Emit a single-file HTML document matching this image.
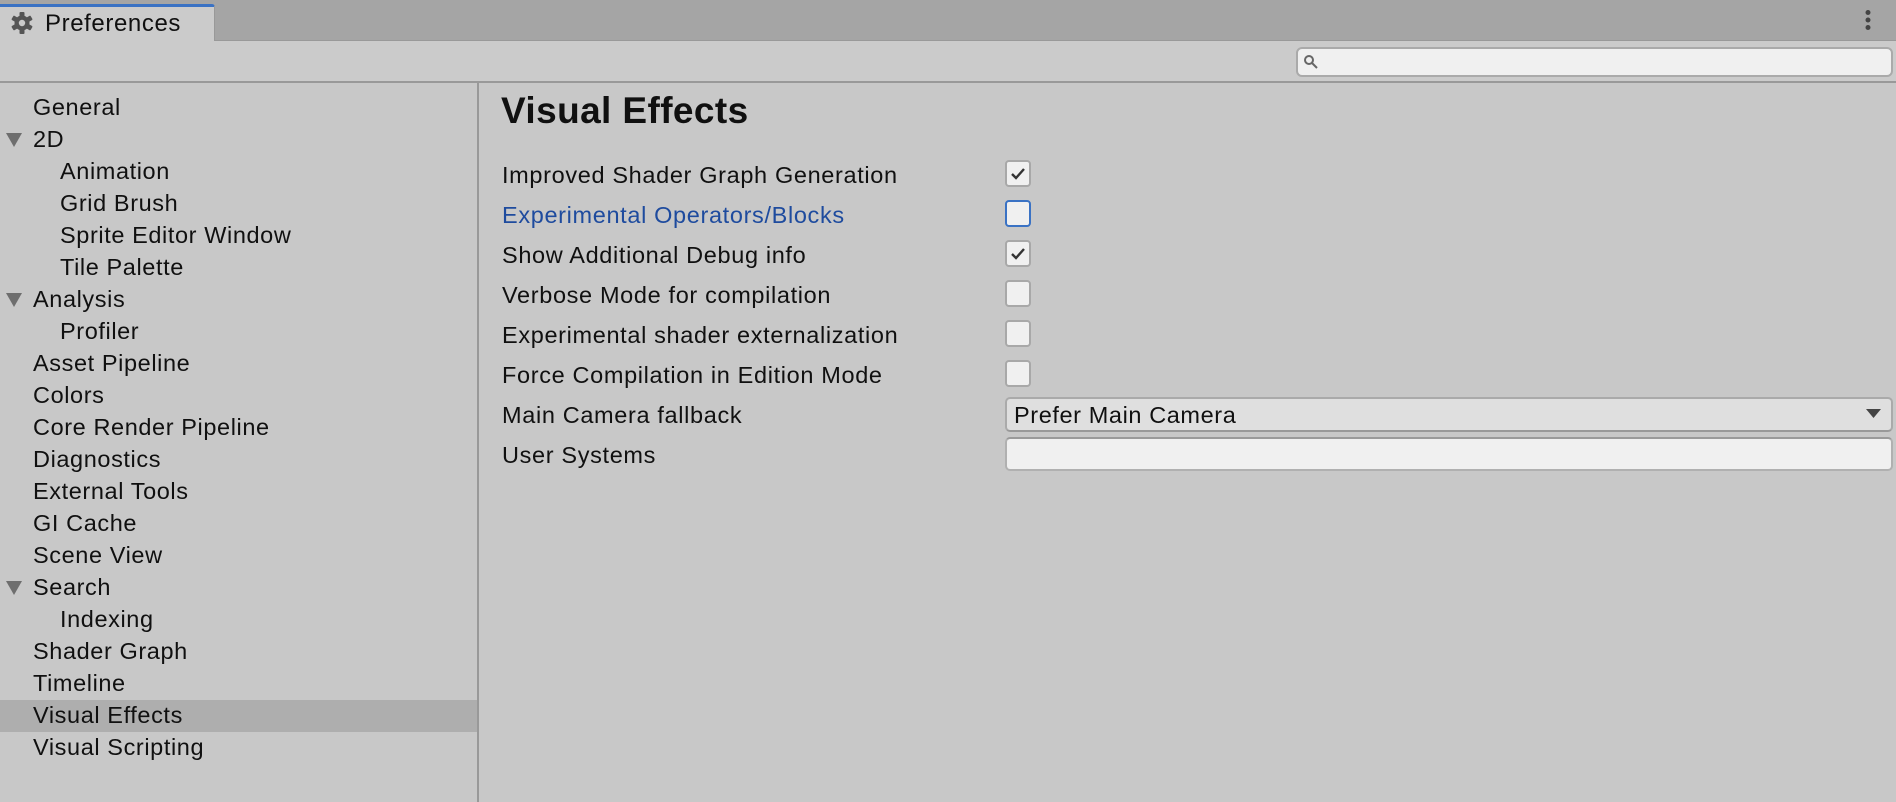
<!DOCTYPE html>
<html><head><meta charset="utf-8"><style>
*{margin:0;padding:0;box-sizing:border-box}
body{width:1896px;height:802px;background:#c8c8c8;font-family:"Liberation Sans",sans-serif;color:#101010;position:relative;overflow:hidden}
.a{position:absolute}
.tabbar{left:0;top:0;width:1896px;height:41px;background:#a5a5a5;border-bottom:1px solid #999}
.tab{left:0;top:4px;width:215px;height:38px;background:#cbcbcb;border-top:3px solid #3a72c4;border-right:1px solid #999;border-top-right-radius:3px}
.toolbar{left:0;top:41px;width:1896px;height:42px;background:#cbcbcb;border-bottom:2px solid #999}
.search{left:1296px;top:47px;width:597px;height:30px;background:#f0f0f0;border:2px solid #aaa;border-radius:6px}
.left{left:0;top:83px;width:479px;height:719px;border-right:2px solid #999}
.it{position:absolute;left:33px;font-size:23.5px;line-height:32px;height:32px;letter-spacing:0.6px;margin-top:1px}
.sub{left:60px}
.tri{position:absolute;left:6px;width:0;height:0;border-left:8px solid transparent;border-right:8px solid transparent;border-top:14px solid #6e6e6e}
.sel{position:absolute;left:0;top:617px;width:477px;height:32px;background:#aeaeae}
.lab{position:absolute;left:502px;font-size:23.5px;line-height:40px;letter-spacing:0.65px;margin-top:1px}
.cb{position:absolute;left:1005px;width:26px;height:27px;background:#f0f0f0;border:2px solid #a8a8a8;border-radius:4px}
</style></head><body>
<div class="a tabbar"></div>
<div class="a tab"></div>
<svg class="a" style="left:10px;top:11px" width="24" height="24" viewBox="0 0 24 24"><g fill="#555"><circle cx="12" cy="12" r="7.5"/><rect x="9.5" y="1" width="5" height="22" rx="1"/><rect x="9.5" y="1" width="5" height="22" rx="1" transform="rotate(60 12 12)"/><rect x="9.5" y="1" width="5" height="22" rx="1" transform="rotate(120 12 12)"/></g><circle cx="12" cy="12" r="3.2" fill="#cbcbcb"/></svg>
<div class="a" style="left:45px;top:9px;font-size:24px;line-height:30px;letter-spacing:0.6px">Preferences</div>
<svg class="a" style="left:1862px;top:8px" width="12" height="24"><circle cx="6" cy="4.5" r="2.5" fill="#444"/><circle cx="6" cy="12" r="2.5" fill="#444"/><circle cx="6" cy="19.5" r="2.5" fill="#444"/></svg>
<div class="a toolbar"></div>
<div class="a search"></div>
<svg class="a" style="left:1303px;top:54px" width="16" height="16"><circle cx="6" cy="6" r="4" stroke="#666" stroke-width="2" fill="none"/><line x1="9" y1="9" x2="14" y2="14" stroke="#666" stroke-width="2"/></svg>
<div class="a left">
<div class="sel"></div>
<div class="it" style="top:7px">General</div>
<div class="tri" style="top:50px"></div><div class="it" style="top:39px">2D</div>
<div class="it sub" style="top:71px">Animation</div>
<div class="it sub" style="top:103px">Grid Brush</div>
<div class="it sub" style="top:135px">Sprite Editor Window</div>
<div class="it sub" style="top:167px">Tile Palette</div>
<div class="tri" style="top:210px"></div><div class="it" style="top:199px">Analysis</div>
<div class="it sub" style="top:231px">Profiler</div>
<div class="it" style="top:263px">Asset Pipeline</div>
<div class="it" style="top:295px">Colors</div>
<div class="it" style="top:327px">Core Render Pipeline</div>
<div class="it" style="top:359px">Diagnostics</div>
<div class="it" style="top:391px">External Tools</div>
<div class="it" style="top:423px">GI Cache</div>
<div class="it" style="top:455px">Scene View</div>
<div class="tri" style="top:498px"></div><div class="it" style="top:487px">Search</div>
<div class="it sub" style="top:519px">Indexing</div>
<div class="it" style="top:551px">Shader Graph</div>
<div class="it" style="top:583px">Timeline</div>
<div class="it" style="top:615px">Visual Effects</div>
<div class="it" style="top:647px">Visual Scripting</div>
</div>
<div class="a" style="left:501px;top:89px;font-size:37px;font-weight:bold;line-height:44px;letter-spacing:0.4px">Visual Effects</div>
<div class="lab" style="top:154px">Improved Shader Graph Generation</div>
<div class="lab" style="top:194px;color:#1e4b9e">Experimental Operators/Blocks</div>
<div class="lab" style="top:234px">Show Additional Debug info</div>
<div class="lab" style="top:274px">Verbose Mode for compilation</div>
<div class="lab" style="top:314px">Experimental shader externalization</div>
<div class="lab" style="top:354px">Force Compilation in Edition Mode</div>
<div class="lab" style="top:394px">Main Camera fallback</div>
<div class="lab" style="top:434px">User Systems</div>
<div class="cb" style="top:160px"><svg width="22" height="23"><path d="M5 12 L9 16 L17 7" stroke="#333" stroke-width="2.4" fill="none"/></svg></div>
<div class="cb" style="top:200px;border-color:#3a72c4"></div>
<div class="cb" style="top:240px"><svg width="22" height="23"><path d="M5 12 L9 16 L17 7" stroke="#333" stroke-width="2.4" fill="none"/></svg></div>
<div class="cb" style="top:280px"></div>
<div class="cb" style="top:320px"></div>
<div class="cb" style="top:360px"></div>
<div class="a" style="left:1005px;top:397px;width:888px;height:35px;background:#dfdfdf;border:2px solid #aaa;border-bottom-color:#999;border-radius:5px;font-size:23.5px;line-height:32px;padding-left:7px;letter-spacing:0.6px">Prefer Main Camera</div>
<svg class="a" style="left:1866px;top:409px" width="16" height="10"><path d="M0 0 H15 L7.5 9 Z" fill="#444"/></svg>
<div class="a" style="left:1005px;top:437px;width:888px;height:34px;background:#f0f0f0;border:2px solid #b0b0b0;border-top-color:#9a9a9a;border-radius:5px"></div>
</body></html>
